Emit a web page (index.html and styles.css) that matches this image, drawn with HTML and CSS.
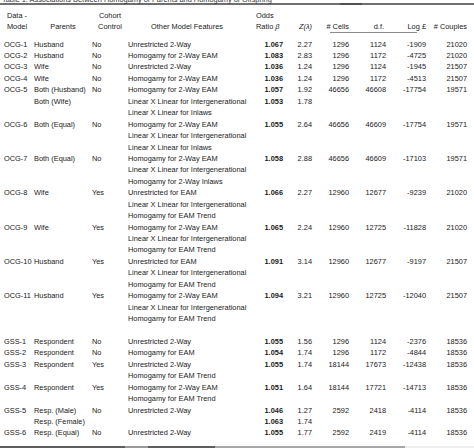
FILE: index.html
```html
<!DOCTYPE html>
<html lang="en">
<head>
<meta charset="utf-8">
<title>Table 1</title>
<link rel="stylesheet" href="styles.css">
</head>
<body>
<div class="page">
  <div class="caption">Table 1. Associations Between Homogamy of Parents and Homogamy of Offspring</div>
  <div class="rule-top"></div>
  <table class="models">
    <colgroup>
      <col class="c-model"><col class="c-parents"><col class="c-cohort"><col class="c-features"><col class="c-odds"><col class="c-z"><col class="c-cells"><col class="c-df"><col class="c-log"><col class="c-couples">
    </colgroup>
    <thead>
      <tr class="labels">
        <th class="h-center">Data -<br>Model</th>
        <th class="h-center">Parents</th>
        <th class="h-center">Cohort<br>Control</th>
        <th class="h-center">Other Model Features</th>
        <th class="h-odds">Odds<br>Ratio <i>β</i></th>
        <th class="num"><i>Z(λ)</i></th>
        <th class="num"># Cells</th>
        <th class="num h-df">d.f.</th>
        <th class="num">Log £</th>
        <th class="num"># Couples</th>
      </tr>
      <tr class="gap"><td colspan="10"></td></tr>
    </thead>
    <tbody>
      <tr><td class="id">OCG-1</td><td>Husband</td><td>No</td><td>Unrestricted 2-Way</td><td class="odds">1.067</td><td class="num">2.27</td><td class="num">1296</td><td class="num">1124</td><td class="num">-1909</td><td class="num">21020</td></tr>
      <tr><td class="id">OCG-2</td><td>Husband</td><td>No</td><td>Homogamy for 2-Way EAM</td><td class="odds">1.083</td><td class="num">2.83</td><td class="num">1296</td><td class="num">1172</td><td class="num">-4725</td><td class="num">21020</td></tr>
      <tr><td class="id">OCG-3</td><td>Wife</td><td>No</td><td>Unrestricted 2-Way</td><td class="odds">1.036</td><td class="num">1.24</td><td class="num">1296</td><td class="num">1124</td><td class="num">-1945</td><td class="num">21507</td></tr>
      <tr><td class="id">OCG-4</td><td>Wife</td><td>No</td><td>Homogamy for 2-Way EAM</td><td class="odds">1.036</td><td class="num">1.24</td><td class="num">1296</td><td class="num">1172</td><td class="num">-4513</td><td class="num">21507</td></tr>
      <tr><td class="id">OCG-5</td><td>Both (Husband)</td><td>No</td><td>Homogamy for 2-Way EAM</td><td class="odds">1.057</td><td class="num">1.92</td><td class="num">46656</td><td class="num">46608</td><td class="num">-17754</td><td class="num">19571</td></tr>
      <tr><td></td><td>Both (Wife)</td><td></td><td>Linear X Linear for Intergenerational</td><td class="odds">1.053</td><td class="num">1.78</td></tr>
      <tr><td></td><td></td><td></td><td>Linear X Linear for Inlaws</td></tr>
      <tr><td class="id">OCG-6</td><td>Both (Equal)</td><td>No</td><td>Homogamy for 2-Way EAM</td><td class="odds">1.055</td><td class="num">2.64</td><td class="num">46656</td><td class="num">46609</td><td class="num">-17754</td><td class="num">19571</td></tr>
      <tr><td></td><td></td><td></td><td>Linear X Linear for Intergenerational</td></tr>
      <tr><td></td><td></td><td></td><td>Linear X Linear for Inlaws</td></tr>
      <tr><td class="id">OCG-7</td><td>Both (Equal)</td><td>No</td><td>Homogamy for 2-Way EAM</td><td class="odds">1.058</td><td class="num">2.88</td><td class="num">46656</td><td class="num">46609</td><td class="num">-17103</td><td class="num">19571</td></tr>
      <tr><td></td><td></td><td></td><td>Linear X Linear for Intergenerational</td></tr>
      <tr><td></td><td></td><td></td><td>Homogamy for 2-Way Inlaws</td></tr>
      <tr><td class="id">OCG-8</td><td>Wife</td><td>Yes</td><td>Unrestricted for EAM</td><td class="odds">1.066</td><td class="num">2.27</td><td class="num">12960</td><td class="num">12677</td><td class="num">-9239</td><td class="num">21020</td></tr>
      <tr><td></td><td></td><td></td><td>Linear X Linear for Intergenerational</td></tr>
      <tr><td></td><td></td><td></td><td>Homogamy for EAM Trend</td></tr>
      <tr><td class="id">OCG-9</td><td>Wife</td><td>Yes</td><td>Homogamy for 2-Way EAM</td><td class="odds">1.065</td><td class="num">2.24</td><td class="num">12960</td><td class="num">12725</td><td class="num">-11828</td><td class="num">21020</td></tr>
      <tr><td></td><td></td><td></td><td>Linear X Linear for Intergenerational</td></tr>
      <tr><td></td><td></td><td></td><td>Homogamy for EAM Trend</td></tr>
      <tr><td class="id">OCG-10</td><td>Husband</td><td>Yes</td><td>Unrestricted for EAM</td><td class="odds">1.091</td><td class="num">3.14</td><td class="num">12960</td><td class="num">12677</td><td class="num">-9197</td><td class="num">21507</td></tr>
      <tr><td></td><td></td><td></td><td>Linear X Linear for Intergenerational</td></tr>
      <tr><td></td><td></td><td></td><td>Homogamy for EAM Trend</td></tr>
      <tr><td class="id">OCG-11</td><td>Husband</td><td>Yes</td><td>Homogamy for 2-Way EAM</td><td class="odds">1.094</td><td class="num">3.21</td><td class="num">12960</td><td class="num">12725</td><td class="num">-12040</td><td class="num">21507</td></tr>
      <tr><td></td><td></td><td></td><td>Linear X Linear for Intergenerational</td></tr>
      <tr><td></td><td></td><td></td><td>Homogamy for EAM Trend</td></tr>
      <tr><td colspan="10"></td></tr>
      <tr><td class="id">GSS-1</td><td>Respondent</td><td>No</td><td>Unrestricted 2-Way</td><td class="odds">1.055</td><td class="num">1.56</td><td class="num">1296</td><td class="num">1124</td><td class="num">-2376</td><td class="num">18536</td></tr>
      <tr><td class="id">GSS-2</td><td>Respondent</td><td>No</td><td>Homogamy for EAM</td><td class="odds">1.054</td><td class="num">1.74</td><td class="num">1296</td><td class="num">1172</td><td class="num">-4844</td><td class="num">18536</td></tr>
      <tr><td class="id">GSS-3</td><td>Respondent</td><td>Yes</td><td>Unrestricted 2-Way</td><td class="odds">1.055</td><td class="num">1.74</td><td class="num">18144</td><td class="num">17673</td><td class="num">-12438</td><td class="num">18536</td></tr>
      <tr><td></td><td></td><td></td><td>Homogamy for EAM Trend</td></tr>
      <tr><td class="id">GSS-4</td><td>Respondent</td><td>Yes</td><td>Homogamy for 2-Way EAM</td><td class="odds">1.051</td><td class="num">1.64</td><td class="num">18144</td><td class="num">17721</td><td class="num">-14713</td><td class="num">18536</td></tr>
      <tr><td></td><td></td><td></td><td>Homogamy for EAM Trend</td></tr>
      <tr><td class="id">GSS-5</td><td>Resp. (Male)</td><td>No</td><td>Unrestricted 2-Way</td><td class="odds">1.046</td><td class="num">1.27</td><td class="num">2592</td><td class="num">2418</td><td class="num">-4114</td><td class="num">18536</td></tr>
      <tr><td></td><td>Resp. (Female)</td><td></td><td></td><td class="odds">1.063</td><td class="num">1.74</td></tr>
      <tr><td class="id">GSS-6</td><td>Resp. (Equal)</td><td>No</td><td>Unrestricted 2-Way</td><td class="odds">1.055</td><td class="num">1.77</td><td class="num">2592</td><td class="num">2419</td><td class="num">-4114</td><td class="num">18536</td></tr>
    </tbody>
  </table>
  <div class="rule-bottom"></div>
</div>
</body>
</html>
```

FILE: styles.css
```css
html, body {
  margin: 0;
  padding: 0;
  background: #ffffff;
}

body {
  width: 474px;
  height: 448px;
  overflow: hidden;
  font-family: "Liberation Sans", Arial, sans-serif;
  font-size: 7.4px;
  color: #1a1a1a;
}

.caption {
  height: 6px;
  line-height: 5px;
  margin-top: -3px;
  padding-left: 2px;
  white-space: nowrap;
  color: #333;
}

.rule-top {
  height: 2px;
  background: linear-gradient(to right, #707070 0 340px, #505050 340px 362px, #707070 362px);
}

.models {
  margin-top: 4.6px;
  width: 467px;
  border-collapse: collapse;
  table-layout: fixed;
  background: linear-gradient(#8a8a8a, #8a8a8a) no-repeat 330px 22.5px / 87px 1px;
}

.c-model { width: 34px; }
.c-parents { width: 58px; }
.c-cohort { width: 36px; }
.c-features { width: 118px; }
.c-odds { width: 37px; }
.c-z { width: 29px; }
.c-cells { width: 37px; }
.c-df { width: 37px; }
.c-log { width: 40px; }
.c-couples { width: 41px; }

.models th,
.models td {
  padding: 0;
  height: 11.44px;
  line-height: 11.44px;
  white-space: nowrap;
  overflow: visible;
  text-align: left;
  font-weight: normal;
}

.models th {
  vertical-align: bottom;
}

.models th.h-center {
  text-align: center;
}

.models th.h-odds {
  padding-left: 10px;
}

.models th.h-df {
  padding-right: 2px;
}

.models .num {
  text-align: right;
}

.models td.odds {
  text-align: right;
  font-weight: bold;
}

.models td.id {
  padding-left: 4px;
}

.models tr.gap td {
  height: 6.1px;
  line-height: 0;
}

.rule-bottom {
  margin-top: 7px;
  height: 3px;
  background: linear-gradient(to right, #5e5e5e 0 125px, #9a9a9a 125px 148px, #5e5e5e 148px 215px, #a6a6a6 215px 405px, #eeeeee 405px);
}
```
